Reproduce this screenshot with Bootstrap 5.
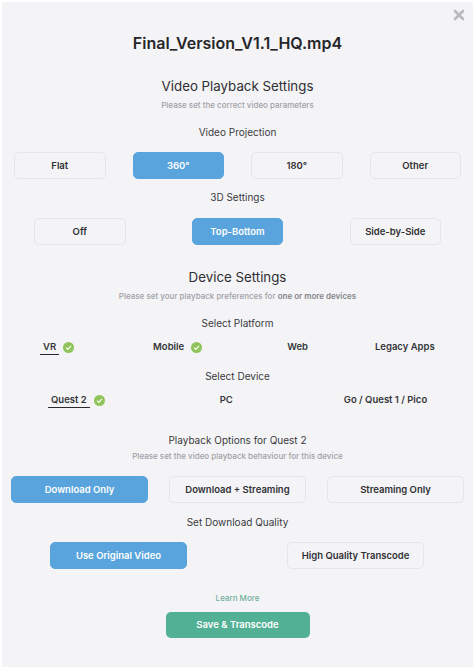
<!doctype html>
<html lang="en"><head><meta charset="utf-8"><title>Video settings</title>
<link href="https://cdn.jsdelivr.net/npm/bootstrap@5.3.0/dist/css/bootstrap.min.css" rel="stylesheet">
<style>
html,body{background:#fff;height:100%}
body{font-family:Inter,"Liberation Sans",sans-serif;color:#2e2e33;overflow:hidden}
.sheet{background:#f4f4f6;margin:2px 0 0 2px;width:471px;height:665px;position:relative;display:flex;flex-direction:column;align-items:center;text-align:center}
.shut{position:absolute;top:7px;right:8px;width:12px;height:12px;background:none;border:0;padding:0;line-height:0}
.fname{font-size:16px;font-weight:600;line-height:22px;margin:30px 0 0;color:#26262a}
.sect{font-size:13.3px;font-weight:400;line-height:18px;margin:0}
.hint{font-size:8px;line-height:12px;color:#a0a0a6;margin:0;font-weight:500}
.hint b{font-weight:600;color:#84848a}
.lbl{font-size:10px;line-height:14px;margin:0;color:#3a3a3f}
.rowline{display:flex;justify-content:space-between;align-self:stretch}
.pick{height:27px;border-radius:5px;border:1px solid #e6e6ea;background:#f4f4f6;font-size:9.5px;font-weight:600;color:#303035;padding:0;flex:none;line-height:25px}
.pick.on{background:#59a4dc;border-color:#59a4dc;color:#fff}
.w91{width:91.5px}.w137{width:137px}
.go{width:144px;height:25.5px;background:#52b095;border:0;border-radius:5px;color:#fff;font-size:9.5px;font-weight:600;margin-top:8px;padding:0}
.more{font-size:8px;line-height:12px;color:#6fae9b;text-decoration:none;font-weight:500}
.tabline{display:flex;align-self:stretch;align-items:center;height:16px;font-size:9.5px;font-weight:600;color:#34343a;position:relative}
.tabitem{display:inline-flex;align-items:center;flex:none}
.tabtxt{display:inline-block;line-height:14px}
.under{border-bottom:1.5px solid #2a2a2e;padding:0 3px;margin-top:1px}
.tick{width:11px;height:11px;flex:none}
</style></head><body>
<div class="sheet">
<button class="shut" aria-label="Close"><svg width="12" height="12" viewBox="0 0 12 12"><path d="M2 2L10 10M10 2L2 10" stroke="#b9b9bd" stroke-width="2.6" stroke-linecap="round" fill="none"/></svg></button>
<h1 class="fname">Final_Version_V1.1_HQ.mp4</h1>
<h2 class="sect" style="margin-top:23px">Video Playback Settings</h2>
<p class="hint mt-1">Please set the correct video parameters</p>
<p class="lbl" style="margin-top:14px">Video Projection</p>
<div class="rowline" style="padding:0 12px;margin-top:13px">
<button class="pick w91">Flat</button><button class="pick w91 on">360°</button><button class="pick w91">180°</button><button class="pick w91">Other</button></div>
<p class="lbl" style="margin-top:11px">3D Settings</p>
<div class="rowline" style="padding:0 32px;margin-top:14px">
<button class="pick w91">Off</button><button class="pick w91 on">Top-Bottom</button><button class="pick w91">Side-by-Side</button></div>
<h2 class="sect" style="margin-top:23px">Device Settings</h2>
<p class="hint mt-1">Please set your playback preferences for <b>one or more devices</b></p>
<p class="lbl" style="margin-top:14px">Select Platform</p>
<div class="tabline" style="margin-top:9px;padding-left:38px">
<span class="tabitem"><span class="tabtxt under">VR</span><svg class="tick" style="margin-left:4px" viewBox="0 0 11 11"><circle cx="5.5" cy="5.5" r="5.5" fill="#8fc45a"/><path d="M3 5.7L4.8 7.4L8 3.9" stroke="#fff" stroke-width="1.1" fill="none"/></svg></span>
<span class="tabitem" style="margin-left:79px"><span class="tabtxt">Mobile</span><svg class="tick" style="margin-left:7px" viewBox="0 0 11 11"><circle cx="5.5" cy="5.5" r="5.5" fill="#8fc45a"/><path d="M3 5.7L4.8 7.4L8 3.9" stroke="#fff" stroke-width="1.1" fill="none"/></svg></span>
<span class="tabitem" style="margin-left:85px">Web</span>
<span class="tabitem" style="margin-left:67px">Legacy Apps</span></div>
<p class="lbl" style="margin-top:14px">Select Device</p>
<div class="tabline" style="margin-top:9px;padding-left:46px">
<span class="tabitem"><span class="tabtxt under">Quest 2</span><svg class="tick" style="margin-left:4px" viewBox="0 0 11 11"><circle cx="5.5" cy="5.5" r="5.5" fill="#8fc45a"/><path d="M3 5.7L4.8 7.4L8 3.9" stroke="#fff" stroke-width="1.1" fill="none"/></svg></span>
<span class="tabitem" style="margin-left:115px">PC</span>
<span class="tabitem" style="margin-left:111px">Go / Quest 1 / Pico</span></div>
<p class="lbl" style="margin-top:25px">Playback Options for Quest 2</p>
<p class="hint" style="margin-top:3px">Please set the video playback behaviour for this device</p>
<div class="rowline" style="padding:0 9px;margin-top:14px">
<button class="pick w137 on">Download Only</button><button class="pick w137">Download + Streaming</button><button class="pick w137">Streaming Only</button></div>
<p class="lbl" style="margin-top:12px">Set Download Quality</p>
<div class="rowline" style="padding:0 49px 0 48px;margin-top:13px">
<button class="pick w137 on">Use Original Video</button><button class="pick w137">High Quality Transcode</button></div>
<a class="more" href="#" style="margin-top:23px">Learn More</a>
<button class="go">Save &amp; Transcode</button>
</div>
<script src="https://cdn.jsdelivr.net/npm/bootstrap@5.3.0/dist/js/bootstrap.bundle.min.js"></script>
</body></html>
